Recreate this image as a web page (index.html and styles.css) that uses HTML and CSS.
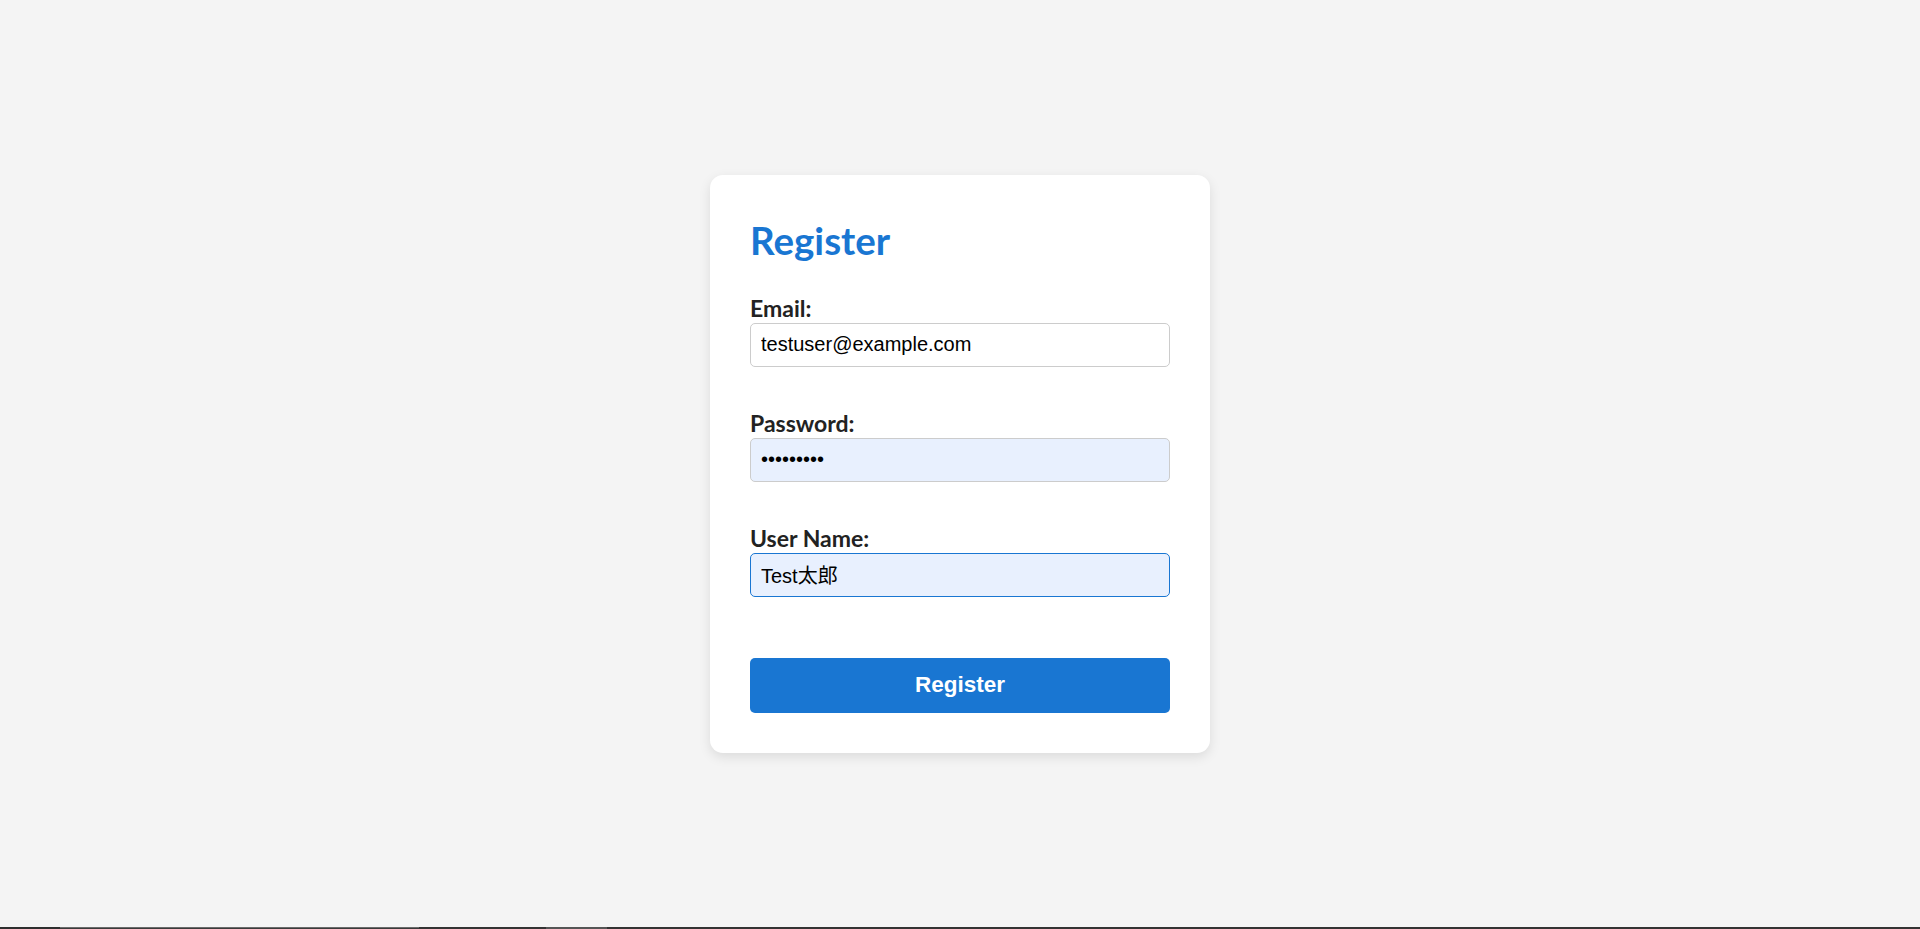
FILE: index.html
```html
<!DOCTYPE html>
<html lang="ja">
<head>
<meta charset="utf-8">
<title>Register</title>
<link rel="stylesheet" href="styles.css">
</head>
<body>
<main class="page">
  <form class="card">
    <h1 class="title">Register</h1>
    <div class="group">
      <label class="label" for="email">Email:</label>
      <input class="input" id="email" type="email" value="testuser@example.com">
    </div>
    <div class="group">
      <label class="label" for="password">Password:</label>
      <input class="input input-filled" id="password" type="password" value="password1">
    </div>
    <div class="group">
      <label class="label" for="username">User Name:</label>
      <input class="input input-filled input-focus" id="username" type="text" value="Test太郎">
    </div>
    <button class="button" type="button">Register</button>
  </form>
</main>
<div class="taskbar">
  <span class="tb-seg tb-a"></span>
  <span class="tb-seg tb-b"></span>
  <span class="tb-seg tb-c"></span>
  <span class="tb-seg tb-d"></span>
  <span class="tb-seg tb-e"></span>
</div>
</body>
</html>
```
FILE: styles.css
```css
html, body {
  margin: 0;
  padding: 0;
  height: 100%;
}
body {
  background: #f4f4f4;
  font-family: Lato, "Noto Sans", sans-serif;
  display: flex;
  flex-direction: column;
}
.page {
  flex: 1;
  display: flex;
  align-items: center;
  justify-content: center;
}
.card {
  box-sizing: border-box;
  width: 500px;
  padding: 40px;
  background: #ffffff;
  border-radius: 13px;
  box-shadow: 0 4px 12px rgba(0, 0, 0, 0.1);
  display: flex;
  flex-direction: column;
}
.title {
  margin: 1px 0 30px;
  font-size: 38.5px;
  line-height: 48px;
  font-weight: 700;
  color: #1976d2;
}
.group {
  display: flex;
  flex-direction: column;
  margin-bottom: 42px;
}
.label {
  font-size: 23px;
  line-height: 29px;
  font-weight: 700;
  color: #222222;
}
.input {
  box-sizing: border-box;
  height: 44px;
  width: 100%;
  padding: 0 10px;
  border: 1px solid #cccccc;
  border-radius: 5px;
  background: #ffffff;
  font-family: "Liberation Sans", Arial, "Noto Sans CJK JP", sans-serif;
  font-size: 20px;
  color: #000000;
  outline: none;
}
.input-filled {
  background: #e8f0fe;
}
.input-focus {
  border-color: #1976d2;
}
.button {
  margin-top: 19px;
  height: 55px;
  border: none;
  border-radius: 5px;
  background: #1976d2;
  color: #ffffff;
  font-family: "Liberation Sans", Arial, sans-serif;
  font-size: 22.5px;
  font-weight: 700;
  cursor: pointer;
}
.taskbar {
  height: 2px;
  display: flex;
  background: #333333;
}
.tb-seg {
  display: block;
  height: 2px;
}
.tb-a { width: 60px; background: #2e2e2e; }
.tb-b { width: 359px; background: #3a3a3a; box-shadow: inset 0 1px 0 #6a6a6a; }
.tb-c { width: 127px; background: #333333; }
.tb-d { width: 61px; background: #555555; }
.tb-e { flex: 1; background: #333333; }
```
